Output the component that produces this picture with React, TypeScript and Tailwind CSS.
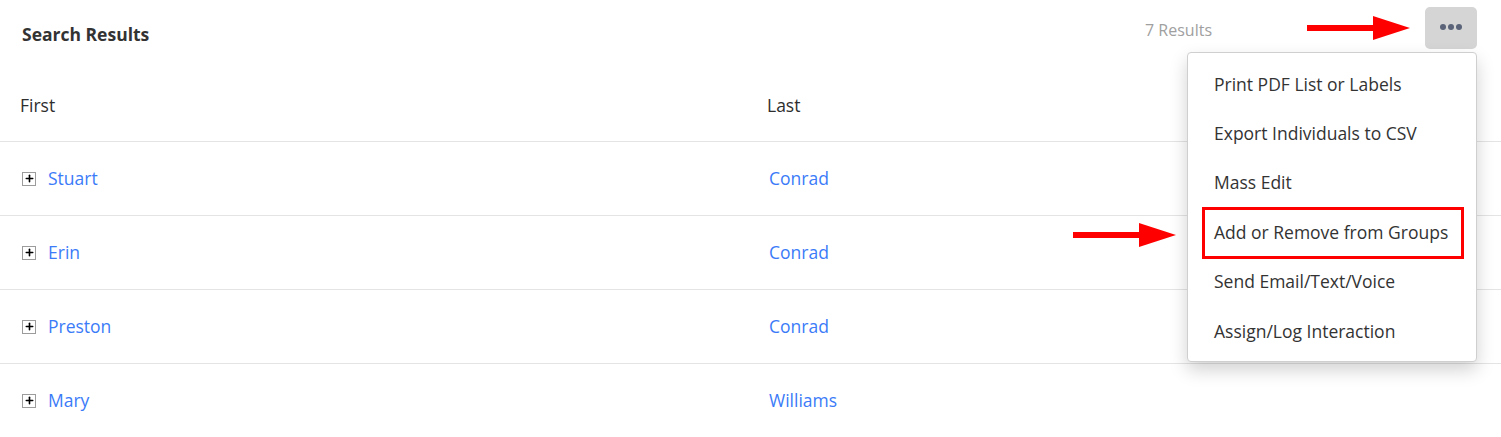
import { Plus } from "lucide-react";

type Person = { first: string; last: string };

const people: Person[] = [
  { first: "Stuart", last: "Conrad" },
  { first: "Erin", last: "Conrad" },
  { first: "Preston", last: "Conrad" },
  { first: "Mary", last: "Williams" },
];

const menuItems = [
  "Print PDF List or Labels",
  "Export Individuals to CSV",
  "Mass Edit",
  "Add or Remove from Groups",
  "Send Email/Text/Voice",
  "Assign/Log Interaction",
];

function RedArrow({ className }: { className: string }) {
  return (
    <svg className={className} width="103" height="24" viewBox="0 0 103 24">
      <rect x="0" y="9" width="70" height="6" fill="#ff0000" />
      <polygon points="66,0 103,12 66,24" fill="#ff0000" />
    </svg>
  );
}

export default function App() {
  return (
    <div
      className="relative w-full h-[437px] bg-white text-[#333] overflow-hidden"
      style={{ fontFamily: '"Open Sans", "Liberation Sans", sans-serif' }}
    >
      {/* header */}
      <div className="flex justify-between h-[70px] pl-[22px] pr-[24px]">
        <h2 className="h-[68px] flex items-center text-[17.5px] font-bold text-[#333]">
          Search Results
        </h2>
        <div className="flex items-start pt-[7px]">
          <span className="mt-[11px] mr-[213px] text-[16px] text-[#a0a0a0]">7 Results</span>
          <button className="w-[52px] h-[42px] rounded-[5px] bg-[#d5d5d5] flex items-center justify-center gap-[2px] pb-[3px]">
            <span className="w-[6px] h-[6px] rounded-full bg-[#5a6378]" />
            <span className="w-[6px] h-[6px] rounded-full bg-[#5a6378]" />
            <span className="w-[6px] h-[6px] rounded-full bg-[#5a6378]" />
          </button>
        </div>
      </div>

      {/* table */}
      <div className="grid grid-cols-[747px_1fr] h-[72px] items-center border-b border-[#e4e4e4] text-[17.5px] font-medium text-[#2e2e2e]">
        <div className="pl-[20px]">First</div>
        <div className="pl-[20px]">Last</div>
      </div>
      {people.map((p) => (
        <div
          key={p.first}
          className="grid grid-cols-[747px_1fr] h-[74px] items-center border-b border-[#e4e4e4] text-[17.5px]"
        >
          <div className="flex items-center pl-[22px]">
            <span className="w-[14px] h-[14px] border border-[#9c9c9c] bg-white flex items-center justify-center mr-[12px]">
              <Plus className="w-[11px] h-[11px] text-black" strokeWidth={3.5} />
            </span>
            <a className="text-[#3b7bf8]">{p.first}</a>
          </div>
          <div className="pl-[22px]">
            <a className="text-[#3b7bf8]">{p.last}</a>
          </div>
        </div>
      ))}

      {/* dropdown menu */}
      <div className="absolute right-[24px] top-[52px] w-[290px] py-[6px] bg-white border border-[#cfcfcf] rounded-[4px] shadow-[0_8px_18px_rgba(0,0,0,0.18)]">
        {menuItems.map((item) => (
          <div key={item} className="relative h-[49.4px] flex items-center px-[26px] text-[17.5px] text-[#333]">
            {item}
            {item === "Add or Remove from Groups" && (
              <span className="absolute left-[14px] right-[12px] top-[0px] bottom-[-2px] border-[3px] border-[#ff0000]" />
            )}
          </div>
        ))}
      </div>

      <RedArrow className="absolute left-[1307px] top-[16px]" />
      <RedArrow className="absolute left-[1073px] top-[223px]" />
    </div>
  );
}
